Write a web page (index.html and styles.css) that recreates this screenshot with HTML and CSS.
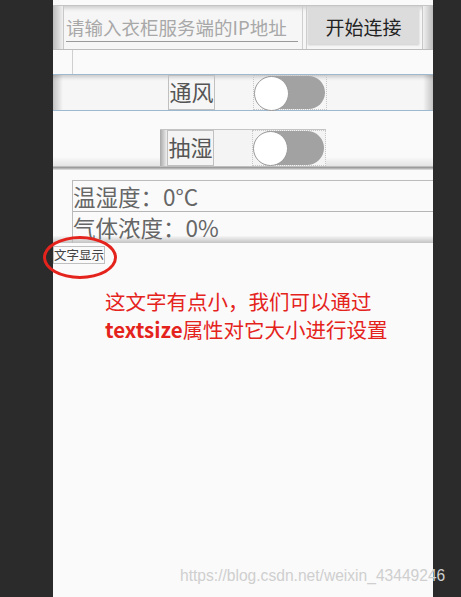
FILE: index.html
```html
<!DOCTYPE html>
<html lang="zh">
<head>
<meta charset="utf-8">
<title>衣柜控制</title>
<link rel="stylesheet" href="styles.css">
</head>
<body>
<div class="screen">
  <div class="top">
    <div class="edge-l"></div>
    <div class="ip"><div class="field">请输入衣柜服务端的IP地址</div></div>
    <div class="sep"></div>
    <div class="btn">开始连接</div>
    <div class="edge-r"></div>
  </div>
  <div class="row2"><div class="vline"></div></div>
  <div class="row3">
    <div class="lbl">通风</div>
    <div class="switch"><div class="track"></div><div class="knob"></div></div>
  </div>
  <div class="row4">
    <div class="box4">
      <div class="lshade"></div>
      <div class="lbl">抽湿</div>
      <div class="switch"><div class="track"></div><div class="knob"></div></div>
    </div>
  </div>
  <div class="shade"></div>
  <div class="infowrap">
    <div class="info">
      <div class="line">温湿度：0°C</div>
      <div class="line last">气体浓度：0%</div>
    </div>
  </div>
  <div class="smallwrap"><span class="small">文字显示</span></div>
  <div class="note">
    <div>这文字有点小，我们可以通过</div>
    <div><span class="en">textsize</span>属性对它大小进行设置</div>
  </div>
  <div class="ring"></div>
  <div class="mark">https://blog.csdn.net/weixin_43449246</div>
</div>
</body>
</html>
```

FILE: styles.css
```css
html, body {
  margin: 0;
  padding: 0;
}
body {
  background: #2b2b2b;
  height: 597px;
  overflow: hidden;
  font-family: "Noto Sans CJK SC", "Noto Sans", sans-serif;
}
.screen {
  position: relative;
  width: 380px;
  height: 592px;
  padding-top: 5px;
  margin-left: 53px;
  background: #fafafa;
}
.top {
  height: 43px;
  display: flex;
  border-top: 1px solid #c4c4c4;
  border-bottom: 1px solid #bdbdbd;
  background: #f6f6f6;
  box-shadow: inset 0 5px 4px -3px rgba(0,0,0,0.18);
}
.edge-l {
  width: 10px;
  border-right: 1px solid #c8c8c8;
  background: linear-gradient(to right, #bcbcbc, #f0f0f0);
}
.ip {
  width: 238px;
}
.field {
  margin: 7px 4px 0 2px;
  height: 28px;
  line-height: 28px;
  border-bottom: 1px solid #9a9a9a;
  font-size: 18.5px;
  color: #a8a8a8;
  white-space: nowrap;
  overflow: hidden;
}
.sep {
  width: 3px;
  border-left: 1px solid #cfcfcf;
  border-right: 1px solid #cfcfcf;
}
.btn {
  width: 111px;
  margin: 2px 3px 5px 1px;
  background: #dcdcdc;
  box-shadow: 0 1px 2px rgba(0,0,0,0.18);
  display: flex;
  align-items: center;
  justify-content: center;
  font-size: 19px;
  color: #222;
}
.edge-r {
  width: 10px;
  border-left: 1px solid #c8c8c8;
  background: linear-gradient(to right, #f0f0f0, #bcbcbc);
}
.row2 {
  height: 24px;
  padding-left: 19px;
}
.vline {
  width: 1px;
  height: 100%;
  background: #cfcfcf;
}
.row3 {
  height: 35px;
  display: flex;
  padding-left: 115px;
  border-top: 1px solid #9db8cf;
  border-bottom: 1px solid #9db8cf;
  background:
    linear-gradient(to right, #c4c4c4, #f6f6f6 10px, #f6f6f6 370px, #c4c4c4),
    #f6f6f6;
  box-shadow: inset 0 5px 4px -3px rgba(0,0,0,0.2);
}
.lbl {
  width: 45px;
  border: 1px solid #c0c0c0;
  font-size: 22px;
  line-height: 31px;
  color: #555;
  text-align: center;
  white-space: nowrap;
}
.switch {
  position: relative;
  width: 72px;
  margin-left: 38px;
  border: 1px dotted #c8c8c8;
}
.track {
  position: absolute;
  left: 14px;
  right: 1px;
  top: 0;
  bottom: 0;
  background: #a2a2a2;
  border-radius: 0 18px 18px 0;
}
.knob {
  position: absolute;
  left: 0;
  top: 0;
  width: 33px;
  height: 33px;
  border: 1px solid #999;
  border-radius: 50%;
  background: #fff;
}
.row4 {
  margin-top: 18px;
  height: 37px;
  padding-left: 107px;
  display: flex;
  background: linear-gradient(to bottom, rgba(0,0,0,0) 75%, rgba(0,0,0,0.09));
}
.box4 {
  display: flex;
  border-top: 1px solid #c4c4c4;
  background: #f4f4f4;
}
.box4 .switch {
  margin-left: 38px;
}
.lshade {
  width: 7px;
  background: linear-gradient(to right, #a8a8a8, #efefef);
}
.shade {
  height: 4px;
  background: linear-gradient(#cfcfcf, #999 40%, #e6e6e6);
}
.infowrap {
  margin-top: 10px;
  padding-left: 19px;
  background: linear-gradient(to bottom, rgba(0,0,0,0) 88%, rgba(0,0,0,0.22));
}
.info {
  border-top: 1px solid #bbb;
  border-left: 1px solid #bbb;
}
.line {
  height: 30px;
  line-height: 30px;
  font-size: 22.5px;
  color: #666;
  border-bottom: 1px solid #b5b5b5;
  white-space: nowrap;
}
.line.last {
  border-bottom: none;
  height: 31px;
}
.smallwrap {
  display: flex;
  padding-top: 3px;
}
.small {
  display: block;
  font-size: 12.5px;
  line-height: 16px;
  color: #444;
  border: 1px solid #c0c0c0;
}
.note {
  margin-top: 23px;
  padding-left: 52px;
  font-size: 20.5px;
  line-height: 28px;
  color: #e5231d;
  white-space: nowrap;
}
.en {
  font-weight: bold;
}
.ring {
  position: absolute;
  left: -10px;
  top: 236px;
  width: 74px;
  height: 43px;
  box-sizing: border-box;
  border: 3px solid #e5231d;
  border-radius: 50%;
}
.mark {
  position: absolute;
  left: 127px;
  top: 567px;
  font-family: "Liberation Sans", Arial, sans-serif;
  font-size: 15.6px;
  color: #cfcfcf;
  white-space: nowrap;
}
```
